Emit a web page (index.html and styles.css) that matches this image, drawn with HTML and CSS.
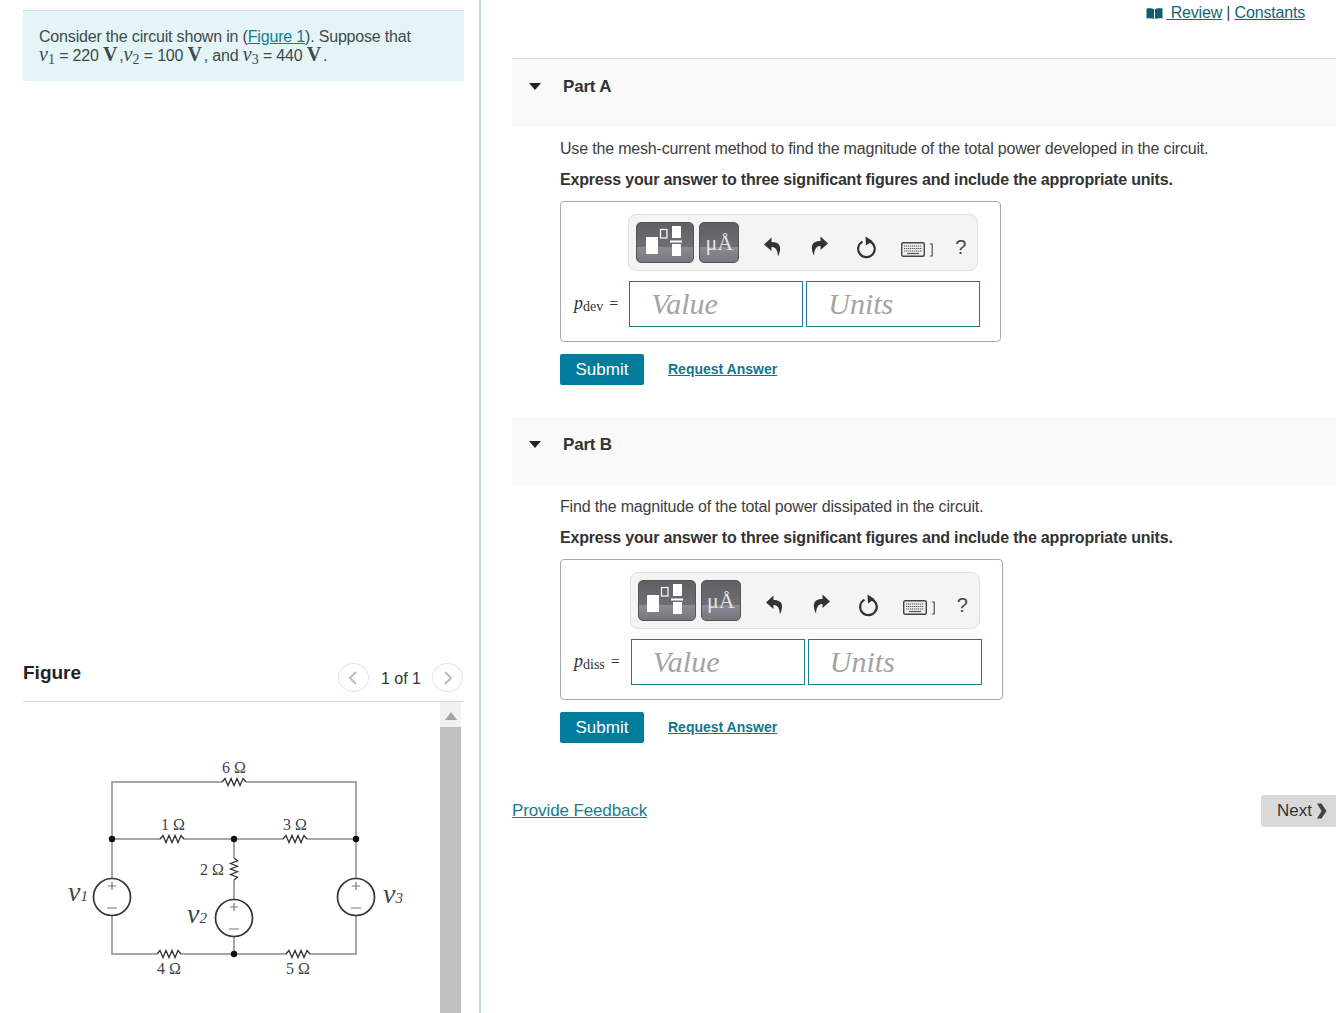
FILE: index.html
```html
<!DOCTYPE html>
<html lang="en">
<head>
<meta charset="utf-8">
<title>Circuit problem</title>
<link rel="stylesheet" href="styles.css">
</head>
<body>
<svg class="defs" width="0" height="0" aria-hidden="true">
  <symbol id="undo" viewBox="0 0 20 22"><path d="M8.500 1.500 L1 8.500 L8.500 15 L8.500 11 C12 11 14.500 13 15 20.500 C18.500 13 18.500 6 8.500 6 Z" fill="#333"/></symbol>
  <symbol id="redo" viewBox="0 0 20 22"><path d="M11.500 1.500 L19 8.500 L11.500 15 L11.500 11 C8 11 5.500 13 5 20.500 C1.500 13 1.500 6 11.500 6 Z" fill="#333"/></symbol>
  <symbol id="reset" viewBox="0 0 22 24"><path d="M14 5.400 A8.300 8.300 0 1 1 6.500 5.600" fill="none" stroke="#333" stroke-width="2.200"/><path d="M9.500 0.500 L16.500 5 L10 9.500 Z" fill="#333"/></symbol>
  <symbol id="kbd" viewBox="0 0 36 16"><rect x="0.700" y="0.700" width="22.600" height="13.600" rx="1.500" fill="#eee" stroke="#444" stroke-width="1.400"/><path d="M3 4h18M3 6.500h18M3 9h18" stroke="#555" stroke-width="1.200" stroke-dasharray="1.300 .7"/><path d="M6 11.500h12" stroke="#555" stroke-width="1.200"/><path d="M29 2h2.200v12H29" fill="none" stroke="#444" stroke-width="1.100"/></symbol>
  <symbol id="tpl" viewBox="0 0 57 41"><rect x="9" y="15" width="12" height="17" fill="#fff"/><rect x="23.500" y="7.500" width="6.500" height="8.500" fill="none" stroke="#fff" stroke-width="1.200"/><rect x="35" y="4" width="9" height="12" fill="#fff"/><rect x="33" y="18.500" width="12" height="2" fill="#fff"/><rect x="35" y="22" width="9" height="12" fill="#fff"/></symbol>
</svg>

<div class="page">
  <aside class="left">
    <div class="intro">
      <p>Consider the circuit shown in (<a href="#">Figure 1</a>). Suppose that<br>
      <span class="m">v<sub>1</sub></span> = 220 <span class="mv">V</span>,<span class="m">v<sub>2</sub></span> = 100 <span class="mv">V</span>, and <span class="m">v<sub>3</sub></span> = 440 <span class="mv">V</span>.</p>
    </div>
    <div class="fig-head">
      <h2>Figure</h2>
      <div class="pager">
        <span class="round">
          <svg width="10" height="16" viewBox="0 0 10 16"><path d="M8 2 L2 8 L8 14" fill="none" stroke="#bbb" stroke-width="2"/></svg>
        </span>
        <span class="count">1 of 1</span>
        <span class="round">
          <svg width="10" height="16" viewBox="0 0 10 16"><path d="M2 2 L8 8 L2 14" fill="none" stroke="#bbb" stroke-width="2"/></svg>
        </span>
      </div>
    </div>
    <div class="fig-body">
      <svg class="circuit" width="417" height="311" viewBox="23 702 417 311">
        <g fill="none" stroke="#8b8b8b" stroke-width="1.500">
          <path d="M112 879V782H222M246 782H356V879"/>
          <path d="M112 839H160M184 839H283M307 839H356"/>
          <path d="M234 839V858M234 880V900"/>
          <path d="M112 915V954H157M181 954H286M310 954H356V915"/>
          <path d="M234 936V954"/>
        </g>
        <g fill="none" stroke="#333" stroke-width="1.300">
          <path d="M222 782l3-3.500 3 7 3-7 3 7 3-7 3 7 3-7 3 3.500"/>
          <path d="M160 839l3-3.500 3 7 3-7 3 7 3-7 3 7 3-7 3 3.500"/>
          <path d="M283 839l3-3.500 3 7 3-7 3 7 3-7 3 7 3-7 3 3.500"/>
          <path d="M157 954l3-3.500 3 7 3-7 3 7 3-7 3 7 3-7 3 3.500"/>
          <path d="M286 954l3-3.500 3 7 3-7 3 7 3-7 3 7 3-7 3 3.500"/>
          <path d="M234 858l3.500 2.750-7 2.750 7 2.750-7 2.750 7 2.750-7 2.750 7 2.750-3.500 2.750"/>
        </g>
        <g fill="#fff" stroke="#333" stroke-width="1.700">
          <circle cx="112" cy="897" r="18.500"/>
          <circle cx="234" cy="918" r="18.500"/>
          <circle cx="356" cy="897" r="18.500"/>
        </g>
        <g stroke="#777" stroke-width="1.200">
          <path d="M112 882v8M108 886h8M107 908h10"/>
          <path d="M234 903v8M230 907h8M229 929h10"/>
          <path d="M356 882v8M352 886h8M351 908h10"/>
        </g>
        <g fill="#111">
          <circle cx="112" cy="839" r="3.200"/>
          <circle cx="234" cy="839" r="3.200"/>
          <circle cx="356" cy="839" r="3.200"/>
          <circle cx="234" cy="954" r="3.200"/>
        </g>
        <g class="ohm">
          <text x="234" y="773" text-anchor="middle">6 Ω</text>
          <text x="173" y="830" text-anchor="middle">1 Ω</text>
          <text x="295" y="830" text-anchor="middle">3 Ω</text>
          <text x="212" y="875" text-anchor="middle">2 Ω</text>
          <text x="169" y="974" text-anchor="middle">4 Ω</text>
          <text x="298" y="974" text-anchor="middle">5 Ω</text>
        </g>
        <g class="vlabel">
          <text x="68" y="901">v<tspan class="vsub">1</tspan></text>
          <text x="187" y="923">v<tspan class="vsub">2</tspan></text>
          <text x="383" y="903">v<tspan class="vsub">3</tspan></text>
        </g>
      </svg>
      <div class="scrollbar">
        <span class="arrow"></span>
        <span class="thumb"></span>
      </div>
    </div>
  </aside>

  <main class="right">
    <div class="top-links">
      <a href="#"><svg class="book" width="17" height="11" viewBox="0 0 17 11"><path d="M0.500 0.500C3 0 6 0 8 1.200V11C6 10 3 10 0.500 10.500ZM16.500 0.500C14 0 11 0 9 1.200V11C11 10 14 10 16.500 10.500Z" fill="#0f5f70"/></svg> Review</a> | <a href="#">Constants</a>
    </div>

    <section class="part">
      <header class="part-head"><span class="tri"></span><h3>Part A</h3></header>
      <div class="part-body">
        <p class="q">Use the mesh-current method to find the magnitude of the total power developed in the circuit.</p>
        <p class="q strong">Express your answer to three significant figures and include the appropriate units.</p>
        <div class="answer">
          <div class="toolbar">
            <span class="mbtn wide"><svg width="57" height="41"><use href="#tpl"/></svg></span>
            <span class="mbtn">μÅ</span>
            <svg class="ti undo" width="20" height="22"><use href="#undo"/></svg>
            <svg class="ti redo" width="20" height="22"><use href="#redo"/></svg>
            <svg class="ti reset" width="22" height="24"><use href="#reset"/></svg>
            <svg class="ti kbd" width="36" height="16"><use href="#kbd"/></svg>
            <span class="help">?</span>
          </div>
          <div class="lab"><i>p</i><small>dev</small> <span>=</span></div>
          <div class="fields">
            <div class="field">Value</div>
            <div class="field">Units</div>
          </div>
        </div>
        <div class="actions">
          <a class="submit" href="#">Submit</a>
          <a class="req" href="#">Request Answer</a>
        </div>
      </div>
    </section>

    <section class="part second">
      <header class="part-head"><span class="tri"></span><h3>Part B</h3></header>
      <div class="part-body">
        <p class="q">Find the magnitude of the total power dissipated in the circuit.</p>
        <p class="q strong">Express your answer to three significant figures and include the appropriate units.</p>
        <div class="answer">
          <div class="toolbar">
            <span class="mbtn wide"><svg width="57" height="41"><use href="#tpl"/></svg></span>
            <span class="mbtn">μÅ</span>
            <svg class="ti undo" width="20" height="22"><use href="#undo"/></svg>
            <svg class="ti redo" width="20" height="22"><use href="#redo"/></svg>
            <svg class="ti reset" width="22" height="24"><use href="#reset"/></svg>
            <svg class="ti kbd" width="36" height="16"><use href="#kbd"/></svg>
            <span class="help">?</span>
          </div>
          <div class="lab"><i>p</i><small>diss</small> <span>=</span></div>
          <div class="fields">
            <div class="field">Value</div>
            <div class="field">Units</div>
          </div>
        </div>
        <div class="actions">
          <a class="submit" href="#">Submit</a>
          <a class="req" href="#">Request Answer</a>
        </div>
      </div>
    </section>

    <div class="foot">
      <a class="feedback" href="#">Provide Feedback</a>
      <a class="next" href="#">Next <svg width="11" height="16" viewBox="0 0 11 16"><path d="M1 0.500H5.500L10.500 8L5.500 15.500H1L5.500 8Z" fill="#444"/></svg></a>
    </div>
  </main>
</div>
</body>
</html>
```

FILE: styles.css
```css
* { box-sizing: border-box; }
html, body { margin: 0; height: 1013px; overflow: hidden; background: #fff; }
body { font-family: "Liberation Sans", Arial, sans-serif; font-size: 16px; color: #333; }
a { color: #007c91; }
.defs { display: block; height: 0; }

.page { display: grid; grid-template-columns: 481px 1fr; height: 1013px; }

.left { border-right: 2px solid #c3d8dd; padding: 10px 15px 0 23px; overflow: hidden; }
.intro { height: 71px; background: #e5f4f6; border-top: 1px solid #cfe0e3; padding: 16px; }
.intro p { margin: 0; line-height: 19px; letter-spacing: -0.18px; color: #3d4a4d; }
.intro a { color: #0f7f92; }
.m { font-family: "Liberation Serif", serif; font-style: italic; font-size: 20px; letter-spacing: 0; line-height: 0; }
.m sub { font-family: "Liberation Serif", serif; font-size: 14px; font-style: normal; line-height: 0; vertical-align: -3px; }
.mv { font-family: "Liberation Serif", serif; font-size: 20px; font-weight: bold; margin-right: 2px; line-height: 0; }

.fig-head { margin-top: 574px; height: 47px; border-bottom: 1px solid #ddd; display: flex; justify-content: space-between; align-items: flex-start; }
.fig-head h2 { margin: 7px 0 0; font-size: 19px; line-height: 22px; font-weight: bold; color: #222; }
.pager { display: flex; align-items: center; gap: 12px; padding: 8px 1px 0 0; }
.round { width: 31px; height: 29px; border: 1px solid #e6e6e6; border-radius: 50%; display: flex; align-items: center; justify-content: center; }
.count { font-size: 16px; color: #333; position: relative; top: 1px; margin-right: -1px; }

.fig-body { display: flex; height: 311px; }
.circuit { flex: none; display: block; }
.circuit .ohm text { font-family: "Liberation Serif", serif; font-size: 16px; fill: #444; }
.circuit .vlabel text { font-family: "Liberation Serif", serif; font-style: italic; font-size: 28px; fill: #444; }
.circuit .vlabel .vsub { font-size: 15px; }
.scrollbar { width: 21px; background: #f1f1f1; display: flex; flex-direction: column; align-items: center; }
.arrow { margin: 10px 0 7px; width: 0; height: 0; border-left: 6px solid transparent; border-right: 6px solid transparent; border-bottom: 8px solid #a3a3a3; }
.thumb { flex: 1; align-self: stretch; background: #c1c1c1; }

.right { padding-left: 31px; min-width: 0; }
.top-links { height: 58px; padding-top: 3px; padding-right: 31px; text-align: right; color: #444; line-height: 19px; letter-spacing: -0.18px; }
.top-links a { color: #146577; }
.book { vertical-align: -1px; margin-right: 3px; }

.part-head { height: 69px; background: #f9f9f9; border-top: 1px solid #dedede; display: flex; align-items: flex-start; padding: 18px 0 0 17px; }
.second .part-head { height: 68px; border-top: 0; padding-top: 18px; }
.tri { width: 0; height: 0; margin-top: 6px; border-left: 6.500px solid transparent; border-right: 6.500px solid transparent; border-top: 7px solid #222; }
.part-head h3 { margin: 0 0 0 22px; font-size: 17px; letter-spacing: -0.2px; font-weight: bold; color: #333; line-height: 19px; }
.part-body { padding: 12px 0 0 48px; }
.q { margin: 0 0 12px; line-height: 19px; color: #3e3e3e; letter-spacing: -0.18px; }
.strong { font-weight: bold; color: #333; }
.answer { display: inline-grid; grid-template-columns: auto auto; grid-template-rows: auto auto; align-content: start; margin-top: 0; border: 1px solid #a9a9a9; border-radius: 4px; padding: 12px 20px 0 13px; height: 141px; align-items: center; vertical-align: top; }
.toolbar { grid-column: 2; width: 350px; height: 57px; margin-left: -1px; background: #f4f4f4; border: 1px solid #e0e0e0; border-radius: 8px; display: flex; align-items: center; padding-left: 7px; gap: 5px; }
.mbtn { flex: none; height: 41px; width: 40px; border-radius: 5px; border: 1px solid #555; background: linear-gradient(#5f5f64 0, #6e6e73 61%, #8c8c94 61%, #76767e 100%); color: #e4e4e4; font-family: "Liberation Serif", serif; font-size: 22px; display: flex; align-items: center; justify-content: center; overflow: hidden; }
.mbtn.wide { width: 58px; }
.mbtn svg { flex: none; }
.ti { flex: none; }
.undo { margin-left: 19px; margin-top: 9px; }
.redo { margin-left: 21px; margin-top: 7px; }
.reset { margin-left: 22px; margin-top: 10px; }
.kbd { margin-left: 18px; margin-top: 15px; margin-right: -6px; }
.help { margin-left: 19px; font-size: 20px; color: #444; margin-top: 10px; }
.lab { grid-column: 1; grid-row: 2; font-family: "Liberation Serif", serif; font-size: 18px; color: #333; margin-top: 8px; white-space: nowrap; padding-right: 11px; }
.lab small { font-size: 14px; vertical-align: -2px; line-height: 0; }
.lab span { font-size: 16px; margin-left: 1.500px; }
.fields { grid-column: 2; grid-row: 2; display: flex; gap: 3px; margin-top: 10px; }
.field { width: 174px; height: 46px; border: 1px solid #1f7a8c; font-family: "Liberation Serif", serif; font-style: italic; font-size: 30px; color: #a3a3a3; padding: 4px 0 0 21px; line-height: 35px; }
.actions { display: flex; align-items: center; margin-top: 12px; height: 31px; }
.submit { width: 84px; height: 31px; background: #007c9c; color: #fff; border-radius: 2px; display: flex; align-items: center; justify-content: center; text-decoration: none; font-size: 17px; }
.req { margin-left: 24px; margin-bottom: 2px; font-size: 14px; font-weight: bold; color: #0f7890; }
.second { margin-top: 32px; }
.foot { display: flex; justify-content: space-between; align-items: center; margin-top: 51px; height: 33px; }
.feedback { font-size: 17px; letter-spacing: -0.12px; color: #1a7c8c; }
.next { width: 75px; height: 32px; background: #d9d9d9; border-radius: 3px 0 0 3px; color: #333; text-decoration: none; padding: 1px 0 0 16px; font-size: 17px; display: flex; align-items: center; gap: 4px; }
```
